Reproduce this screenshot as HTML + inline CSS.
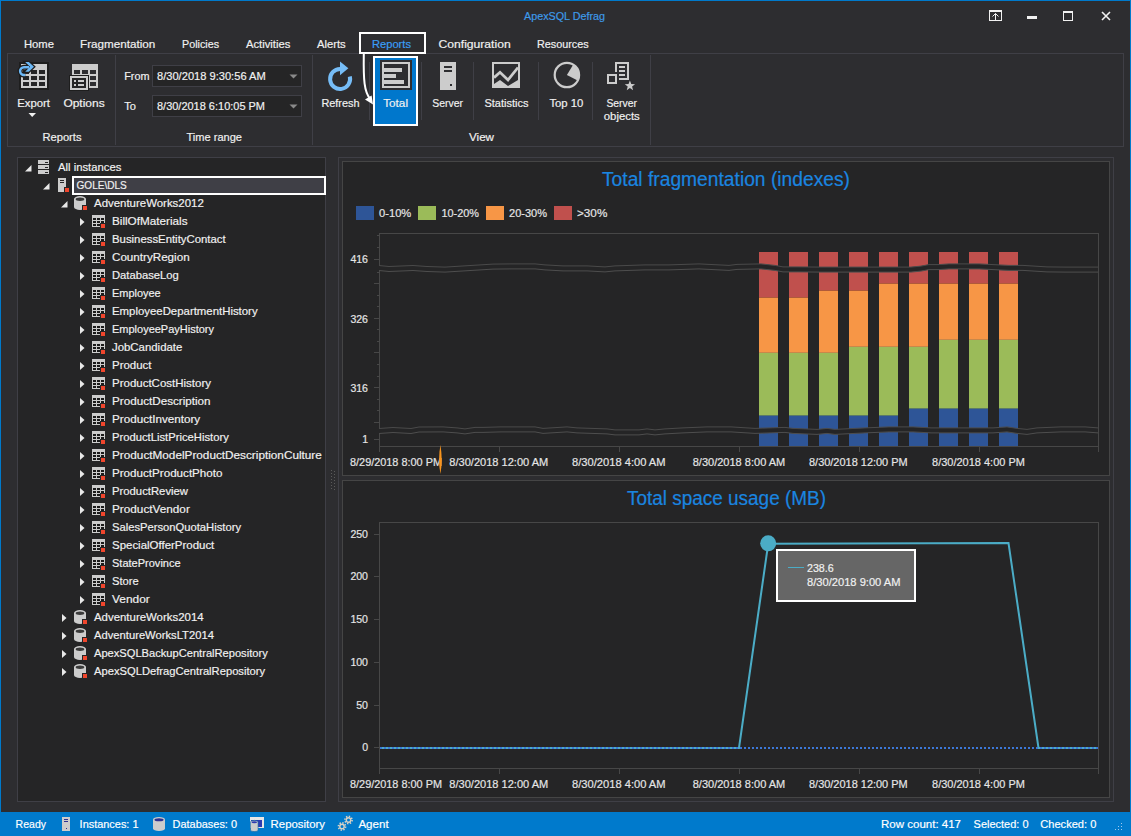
<!DOCTYPE html><html><head><meta charset="utf-8"><title>ApexSQL Defrag</title><style>html,body{margin:0;padding:0;background:#2D2D30;overflow:hidden;width:1131px;height:836px}svg{display:block}text{font-family:"Liberation Sans",sans-serif;white-space:pre}</style></head><body>
<svg width="1131" height="836" viewBox="0 0 1131 836" shape-rendering="crispEdges">
<rect x="0" y="0" width="1131" height="836" fill="#2D2D30" />
<rect x="0" y="0" width="1131" height="1" fill="#007ACC" />
<rect x="0" y="0" width="1" height="836" fill="#007ACC" />
<rect x="1130" y="0" width="1" height="836" fill="#007ACC" />
<text x="524" y="20" font-size="11.4" fill="#3E9BEA" stroke="#3E9BEA" stroke-width="0.18" textLength="81" lengthAdjust="spacingAndGlyphs" >ApexSQL Defrag</text>
<g fill="none" stroke="#F1F1F1" stroke-width="1">
<rect x="989.5" y="10.5" width="12" height="10"/>
</g>
<path d="M995.5 20.5V13.5M992.5 16.5L995.5 13.5L998.5 16.5" stroke="#F1F1F1" fill="none" shape-rendering="auto"/>
<rect x="990" y="11" width="12" height="1" fill="#F1F1F1"/>
<rect x="1027" y="16" width="10" height="3" fill="#F1F1F1" />
<rect x="1063.5" y="11.5" width="9" height="9" fill="none" stroke="#F1F1F1"/>
<rect x="1063" y="11" width="10" height="2" fill="#F1F1F1"/>
<path d="M1102 12L1110 20M1110 12L1102 20" stroke="#F1F1F1" stroke-width="1.6" shape-rendering="auto"/>
<text x="24" y="48" font-size="11.4" fill="#F1F1F1" stroke="#F1F1F1" stroke-width="0.18" textLength="30" lengthAdjust="spacingAndGlyphs" >Home</text>
<text x="80" y="48" font-size="11.4" fill="#F1F1F1" stroke="#F1F1F1" stroke-width="0.18" textLength="75.3" lengthAdjust="spacingAndGlyphs" >Fragmentation</text>
<text x="182" y="48" font-size="11.4" fill="#F1F1F1" stroke="#F1F1F1" stroke-width="0.18" textLength="37" lengthAdjust="spacingAndGlyphs" >Policies</text>
<text x="246" y="48" font-size="11.4" fill="#F1F1F1" stroke="#F1F1F1" stroke-width="0.18" textLength="44.3" lengthAdjust="spacingAndGlyphs" >Activities</text>
<text x="317" y="48" font-size="11.4" fill="#F1F1F1" stroke="#F1F1F1" stroke-width="0.18" textLength="28.6" lengthAdjust="spacingAndGlyphs" >Alerts</text>
<text x="372" y="48" font-size="11.4" fill="#3A9EF8" stroke="#3A9EF8" stroke-width="0.18" textLength="39" lengthAdjust="spacingAndGlyphs" >Reports</text>
<text x="438.5" y="48" font-size="11.4" fill="#F1F1F1" stroke="#F1F1F1" stroke-width="0.18" textLength="72.2" lengthAdjust="spacingAndGlyphs" >Configuration</text>
<text x="537" y="48" font-size="11.4" fill="#F1F1F1" stroke="#F1F1F1" stroke-width="0.18" textLength="51.7" lengthAdjust="spacingAndGlyphs" >Resources</text>
<rect x="7.5" y="53.5" width="1116" height="93" fill="none" stroke="#3F3F46" stroke-width="1"/>
<rect x="360.0" y="33.0" width="65" height="20" fill="none" stroke="#FFFFFF" stroke-width="2"/>
<rect x="115" y="55" width="1" height="90" fill="#3F3F46"/>
<rect x="312" y="55" width="1" height="90" fill="#3F3F46"/>
<rect x="650" y="55" width="1" height="90" fill="#3F3F46"/>
<rect x="369" y="62" width="1" height="58" fill="#3F3F46"/>
<rect x="421" y="62" width="1" height="58" fill="#3F3F46"/>
<rect x="473" y="62" width="1" height="58" fill="#3F3F46"/>
<rect x="538" y="62" width="1" height="58" fill="#3F3F46"/>
<rect x="592" y="62" width="1" height="58" fill="#3F3F46"/>
<text x="42.5" y="140.5" font-size="11.4" fill="#F1F1F1" stroke="#F1F1F1" stroke-width="0.18" textLength="39" lengthAdjust="spacingAndGlyphs" >Reports</text>
<text x="186.5" y="141" font-size="11.4" fill="#F1F1F1" stroke="#F1F1F1" stroke-width="0.18" textLength="55.5" lengthAdjust="spacingAndGlyphs" >Time range</text>
<text x="469" y="141" font-size="11.4" fill="#F1F1F1" stroke="#F1F1F1" stroke-width="0.18" textLength="25" lengthAdjust="spacingAndGlyphs" >View</text>
<rect x="19" y="62" width="30" height="28" fill="#1E1E1E" />
<rect x="21" y="64" width="26" height="24" fill="#CCCCCC" />
<rect x="23" y="70" width="6" height="4" fill="#252526" />
<rect x="23" y="76" width="6" height="4" fill="#252526" />
<rect x="23" y="82" width="6" height="4" fill="#252526" />
<rect x="31" y="70" width="6" height="4" fill="#252526" />
<rect x="31" y="76" width="6" height="4" fill="#252526" />
<rect x="31" y="82" width="6" height="4" fill="#252526" />
<rect x="39" y="70" width="6" height="4" fill="#252526" />
<rect x="39" y="76" width="6" height="4" fill="#252526" />
<rect x="39" y="82" width="6" height="4" fill="#252526" />
<g shape-rendering="auto">
<path d="M28 67.2 H24 A3.9 3.9 0 0 0 24 75 H25.3" fill="none" stroke="#1E1E1E" stroke-width="5"/>
<path d="M25.2 62 L28.8 62 L34 66.8 L28.8 71.7 L25.2 71.7 L30 66.8 Z" fill="#1E1E1E" stroke="#1E1E1E" stroke-width="2.5"/>
<path d="M29 67.2 H24 A3.9 3.9 0 0 0 24 75 H25.3" fill="none" stroke="#6CB8F6" stroke-width="2.5"/>
<path d="M25.2 62 L28.8 62 L34 66.8 L28.8 71.7 L25.2 71.7 L30 66.8 Z" fill="#6CB8F6"/>
</g>
<text x="17.3" y="107" font-size="11.4" fill="#F1F1F1" stroke="#F1F1F1" stroke-width="0.18" textLength="32.7" lengthAdjust="spacingAndGlyphs" >Export</text>
<path d="M28.5 113 H36 L32.2 117 Z" fill="#F1F1F1" shape-rendering="auto"/>
<rect x="72" y="64" width="26" height="24" fill="#CCCCCC" />
<rect x="74" y="70" width="6" height="4" fill="#2D2D30" />
<rect x="82" y="70" width="6" height="4" fill="#2D2D30" />
<rect x="90" y="70" width="6" height="4" fill="#2D2D30" />
<rect x="90" y="76" width="6" height="4" fill="#2D2D30" />
<rect x="90" y="82" width="6" height="4" fill="#2D2D30" />
<rect x="69" y="75" width="20" height="16" fill="#1E1E1E" />
<rect x="70" y="76" width="18" height="14" fill="#CCCCCC" />
<rect x="72" y="78" width="14" height="10" fill="#252526" />
<rect x="74" y="80" width="2" height="2" fill="#CCCCCC" />
<rect x="78" y="80" width="6" height="2" fill="#CCCCCC" />
<rect x="74" y="84" width="2" height="2" fill="#CCCCCC" />
<rect x="78" y="84" width="6" height="2" fill="#CCCCCC" />
<text x="63.4" y="107" font-size="11.4" fill="#F1F1F1" stroke="#F1F1F1" stroke-width="0.18" textLength="41.3" lengthAdjust="spacingAndGlyphs" >Options</text>
<text x="124.2" y="80" font-size="11.4" fill="#F1F1F1" stroke="#F1F1F1" stroke-width="0.18" textLength="25.3" lengthAdjust="spacingAndGlyphs" >From</text>
<text x="124.2" y="110" font-size="11.4" fill="#F1F1F1" stroke="#F1F1F1" stroke-width="0.18" textLength="11.7" lengthAdjust="spacingAndGlyphs" >To</text>
<rect x="152.5" y="65.5" width="149" height="21" fill="#252526" stroke="#3F3F46" stroke-width="1"/>
<rect x="152.5" y="95.5" width="149" height="21" fill="#252526" stroke="#3F3F46" stroke-width="1"/>
<text x="157" y="80" font-size="11.4" fill="#F1F1F1" stroke="#F1F1F1" stroke-width="0.18" textLength="108.7" lengthAdjust="spacingAndGlyphs" >8/30/2018 9:30:56 AM</text>
<text x="157" y="110" font-size="11.4" fill="#F1F1F1" stroke="#F1F1F1" stroke-width="0.18" textLength="108" lengthAdjust="spacingAndGlyphs" >8/30/2018 6:10:05 PM</text>
<path d="M289.5 74.5 H297.5 L293.5 78.5 Z" fill="#8A8A8A" shape-rendering="auto"/>
<path d="M289.5 104.5 H297.5 L293.5 108.5 Z" fill="#8A8A8A" shape-rendering="auto"/>
<g shape-rendering="auto">
<path d="M340.10 69.00 A10 10 0 1 0 349.80 76.58" fill="none" stroke="#76BDF7" stroke-width="4"/>
<path d="M340 61.5 L348.4 68.3 L340 75.2 Z" fill="#76BDF7"/>
</g>
<text x="321.4" y="107" font-size="11.4" fill="#F1F1F1" stroke="#F1F1F1" stroke-width="0.18" textLength="38.2" lengthAdjust="spacingAndGlyphs" >Refresh</text>
<rect x="374.0" y="57.0" width="43" height="68" fill="#0077CC" stroke="#FFFFFF" stroke-width="2"/>
<rect x="380" y="60" width="32" height="30" fill="#2D2D30" />
<rect x="383.0" y="63.0" width="26" height="24" fill="none" stroke="#CCCCCC" stroke-width="2"/>
<rect x="384" y="68" width="18" height="4" fill="#CCCCCC" />
<rect x="384" y="74" width="12" height="4" fill="#CCCCCC" />
<rect x="384" y="80" width="20" height="4" fill="#CCCCCC" />
<text x="383.2" y="107" font-size="11.4" fill="#F1F1F1" stroke="#F1F1F1" stroke-width="0.18" textLength="24.8" lengthAdjust="spacingAndGlyphs" >Total</text>
<path d="M363.8 54 C363.4 80 364.2 92 370.2 98.8" fill="none" stroke="#FFFFFF" stroke-width="2" shape-rendering="auto"/>
<path d="M371.6 95.6 L365 99.6 L373 104.6 Z" fill="#FFFFFF" shape-rendering="auto"/>
<rect x="440" y="62" width="16" height="28" fill="#CCCCCC" />
<rect x="444" y="66" width="8" height="2" fill="#2D2D30" />
<rect x="444" y="70" width="8" height="2" fill="#2D2D30" />
<rect x="450" y="84" width="2" height="2" fill="#2D2D30" />
<text x="432.3" y="107" font-size="11.4" fill="#F1F1F1" stroke="#F1F1F1" stroke-width="0.18" textLength="30.7" lengthAdjust="spacingAndGlyphs" >Server</text>
<rect x="493.0" y="63.0" width="26" height="24" fill="#2D2D30" stroke="#CCCCCC" stroke-width="2"/>
<g shape-rendering="auto">
<path d="M494 84 L500 80 L508 86 L518 80 L518 86 L494 86 Z" fill="#CCCCCC"/>
<path d="M494 77.6 L500 72.3 L508 80 L518 67.5" fill="none" stroke="#CCCCCC" stroke-width="2.8"/>
</g>
<text x="484.4" y="107" font-size="11.4" fill="#F1F1F1" stroke="#F1F1F1" stroke-width="0.18" textLength="44" lengthAdjust="spacingAndGlyphs" >Statistics</text>
<g shape-rendering="auto">
<circle cx="566.9" cy="75" r="12.2" fill="#2D2D30" stroke="#CCCCCC" stroke-width="2.2"/>
<path d="M566.9 75 L573.3 64.5 A12 12 0 0 1 577.6 80.5 Z" fill="#CCCCCC"/>
</g>
<text x="549.4" y="107" font-size="11.4" fill="#F1F1F1" stroke="#F1F1F1" stroke-width="0.18" textLength="34" lengthAdjust="spacingAndGlyphs" >Top 10</text>
<rect x="616.0" y="63.0" width="12" height="16" fill="#2D2D30" stroke="#CCCCCC" stroke-width="2"/>
<rect x="619" y="66" width="6" height="2" fill="#CCCCCC" />
<rect x="619" y="70" width="6" height="2" fill="#CCCCCC" />
<rect x="619" y="74" width="6" height="2" fill="#CCCCCC" />
<rect x="605" y="72" width="14" height="14" fill="#2D2D30" />
<rect x="608.0" y="75.0" width="8" height="8" fill="#2D2D30" stroke="#CCCCCC" stroke-width="2"/>
<polygon points="629.90,80.40 631.25,83.94 635.04,84.13 632.09,86.51 633.07,90.17 629.90,88.10 626.73,90.17 627.71,86.51 624.76,84.13 628.55,83.94" fill="#CCCCCC" shape-rendering="auto"/>
<text x="606.4" y="107" font-size="11.4" fill="#F1F1F1" stroke="#F1F1F1" stroke-width="0.18" textLength="30.5" lengthAdjust="spacingAndGlyphs" >Server</text>
<text x="603.8" y="120" font-size="11.4" fill="#F1F1F1" stroke="#F1F1F1" stroke-width="0.18" textLength="35.9" lengthAdjust="spacingAndGlyphs" >objects</text>
<rect x="17.5" y="157.5" width="308" height="644" fill="#252526" stroke="#3F3F46" stroke-width="1"/>
<path d="M25 171.5 L31.5 171.5 L31.5 165 Z" fill="#E8E8E8" shape-rendering="auto"/>
<rect x="38" y="160" width="11" height="4" fill="#CCCCCC" />
<rect x="45" y="161.5" width="3" height="1.5" fill="#252526" />
<rect x="38" y="165" width="11" height="4" fill="#CCCCCC" />
<rect x="45" y="166.5" width="3" height="1.5" fill="#252526" />
<rect x="38" y="170" width="11" height="4" fill="#CCCCCC" />
<rect x="45" y="171.5" width="3" height="1.5" fill="#252526" />
<text x="58" y="171" font-size="11.4" fill="#F1F1F1" stroke="#F1F1F1" stroke-width="0.18" textLength="63.3" lengthAdjust="spacingAndGlyphs" >All instances</text>
<path d="M43 189.5 L49.5 189.5 L49.5 183 Z" fill="#E8E8E8" shape-rendering="auto"/>
<rect x="58" y="178" width="8" height="14" fill="#CCCCCC" />
<rect x="60" y="180" width="4" height="1" fill="#252526" />
<rect x="60" y="182" width="4" height="1" fill="#252526" />
<rect x="64" y="187" width="6" height="6" fill="#252526" />
<rect x="65" y="188" width="4" height="4" fill="#F0462D" />
<rect x="73.0" y="177.0" width="252" height="17" fill="#3F3F46" stroke="#FFFFFF" stroke-width="2"/>
<text x="76.5" y="189" font-size="11.4" fill="#F1F1F1" stroke="#F1F1F1" stroke-width="0.18" textLength="50.3" lengthAdjust="spacingAndGlyphs" >GOLE\DLS</text>
<path d="M61 207.5 L67.5 207.5 L67.5 201 Z" fill="#E8E8E8" shape-rendering="auto"/>
<g shape-rendering="auto">
<path d="M74 199 A6 3 0 0 1 86 199 V207 A6 3 0 0 1 74 207 Z" fill="#CCCCCC"/>
<ellipse cx="80" cy="199.2" rx="4.3" ry="1.7" fill="#3A3A3A"/>
</g>
<rect x="82" y="205" width="6" height="6" fill="#252526" />
<rect x="83" y="206" width="4" height="4" fill="#F0462D" />
<text x="94" y="207" font-size="11.4" fill="#F1F1F1" stroke="#F1F1F1" stroke-width="0.18" textLength="109.8" lengthAdjust="spacingAndGlyphs" >AdventureWorks2012</text>
<path d="M80 218 L84.5 222 L80 226 Z" fill="#E8E8E8" shape-rendering="auto"/>
<rect x="92" y="215" width="13" height="12" fill="#CCCCCC" />
<rect x="93" y="218" width="3" height="2" fill="#1A1A1A" />
<rect x="93" y="221" width="3" height="2" fill="#1A1A1A" />
<rect x="93" y="224" width="3" height="2" fill="#1A1A1A" />
<rect x="97" y="218" width="3" height="2" fill="#1A1A1A" />
<rect x="97" y="221" width="3" height="2" fill="#1A1A1A" />
<rect x="97" y="224" width="3" height="2" fill="#1A1A1A" />
<rect x="101" y="218" width="3" height="2" fill="#1A1A1A" />
<rect x="101" y="221" width="3" height="2" fill="#1A1A1A" />
<rect x="101" y="224" width="3" height="2" fill="#1A1A1A" />
<rect x="100" y="223" width="6" height="6" fill="#252526" />
<rect x="101" y="224" width="4" height="4" fill="#F0462D" />
<text x="112" y="225" font-size="11.4" fill="#F1F1F1" stroke="#F1F1F1" stroke-width="0.18" textLength="75.5" lengthAdjust="spacingAndGlyphs" >BillOfMaterials</text>
<path d="M80 236 L84.5 240 L80 244 Z" fill="#E8E8E8" shape-rendering="auto"/>
<rect x="92" y="233" width="13" height="12" fill="#CCCCCC" />
<rect x="93" y="236" width="3" height="2" fill="#1A1A1A" />
<rect x="93" y="239" width="3" height="2" fill="#1A1A1A" />
<rect x="93" y="242" width="3" height="2" fill="#1A1A1A" />
<rect x="97" y="236" width="3" height="2" fill="#1A1A1A" />
<rect x="97" y="239" width="3" height="2" fill="#1A1A1A" />
<rect x="97" y="242" width="3" height="2" fill="#1A1A1A" />
<rect x="101" y="236" width="3" height="2" fill="#1A1A1A" />
<rect x="101" y="239" width="3" height="2" fill="#1A1A1A" />
<rect x="101" y="242" width="3" height="2" fill="#1A1A1A" />
<rect x="100" y="241" width="6" height="6" fill="#252526" />
<rect x="101" y="242" width="4" height="4" fill="#F0462D" />
<text x="112" y="243" font-size="11.4" fill="#F1F1F1" stroke="#F1F1F1" stroke-width="0.18" textLength="113.6" lengthAdjust="spacingAndGlyphs" >BusinessEntityContact</text>
<path d="M80 254 L84.5 258 L80 262 Z" fill="#E8E8E8" shape-rendering="auto"/>
<rect x="92" y="251" width="13" height="12" fill="#CCCCCC" />
<rect x="93" y="254" width="3" height="2" fill="#1A1A1A" />
<rect x="93" y="257" width="3" height="2" fill="#1A1A1A" />
<rect x="93" y="260" width="3" height="2" fill="#1A1A1A" />
<rect x="97" y="254" width="3" height="2" fill="#1A1A1A" />
<rect x="97" y="257" width="3" height="2" fill="#1A1A1A" />
<rect x="97" y="260" width="3" height="2" fill="#1A1A1A" />
<rect x="101" y="254" width="3" height="2" fill="#1A1A1A" />
<rect x="101" y="257" width="3" height="2" fill="#1A1A1A" />
<rect x="101" y="260" width="3" height="2" fill="#1A1A1A" />
<rect x="100" y="259" width="6" height="6" fill="#252526" />
<rect x="101" y="260" width="4" height="4" fill="#F0462D" />
<text x="112" y="261" font-size="11.4" fill="#F1F1F1" stroke="#F1F1F1" stroke-width="0.18" textLength="77.6" lengthAdjust="spacingAndGlyphs" >CountryRegion</text>
<path d="M80 272 L84.5 276 L80 280 Z" fill="#E8E8E8" shape-rendering="auto"/>
<rect x="92" y="269" width="13" height="12" fill="#CCCCCC" />
<rect x="93" y="272" width="3" height="2" fill="#1A1A1A" />
<rect x="93" y="275" width="3" height="2" fill="#1A1A1A" />
<rect x="93" y="278" width="3" height="2" fill="#1A1A1A" />
<rect x="97" y="272" width="3" height="2" fill="#1A1A1A" />
<rect x="97" y="275" width="3" height="2" fill="#1A1A1A" />
<rect x="97" y="278" width="3" height="2" fill="#1A1A1A" />
<rect x="101" y="272" width="3" height="2" fill="#1A1A1A" />
<rect x="101" y="275" width="3" height="2" fill="#1A1A1A" />
<rect x="101" y="278" width="3" height="2" fill="#1A1A1A" />
<rect x="100" y="277" width="6" height="6" fill="#252526" />
<rect x="101" y="278" width="4" height="4" fill="#F0462D" />
<text x="112" y="279" font-size="11.4" fill="#F1F1F1" stroke="#F1F1F1" stroke-width="0.18" textLength="66.7" lengthAdjust="spacingAndGlyphs" >DatabaseLog</text>
<path d="M80 290 L84.5 294 L80 298 Z" fill="#E8E8E8" shape-rendering="auto"/>
<rect x="92" y="287" width="13" height="12" fill="#CCCCCC" />
<rect x="93" y="290" width="3" height="2" fill="#1A1A1A" />
<rect x="93" y="293" width="3" height="2" fill="#1A1A1A" />
<rect x="93" y="296" width="3" height="2" fill="#1A1A1A" />
<rect x="97" y="290" width="3" height="2" fill="#1A1A1A" />
<rect x="97" y="293" width="3" height="2" fill="#1A1A1A" />
<rect x="97" y="296" width="3" height="2" fill="#1A1A1A" />
<rect x="101" y="290" width="3" height="2" fill="#1A1A1A" />
<rect x="101" y="293" width="3" height="2" fill="#1A1A1A" />
<rect x="101" y="296" width="3" height="2" fill="#1A1A1A" />
<rect x="100" y="295" width="6" height="6" fill="#252526" />
<rect x="101" y="296" width="4" height="4" fill="#F0462D" />
<text x="112" y="297" font-size="11.4" fill="#F1F1F1" stroke="#F1F1F1" stroke-width="0.18" textLength="48.7" lengthAdjust="spacingAndGlyphs" >Employee</text>
<path d="M80 308 L84.5 312 L80 316 Z" fill="#E8E8E8" shape-rendering="auto"/>
<rect x="92" y="305" width="13" height="12" fill="#CCCCCC" />
<rect x="93" y="308" width="3" height="2" fill="#1A1A1A" />
<rect x="93" y="311" width="3" height="2" fill="#1A1A1A" />
<rect x="93" y="314" width="3" height="2" fill="#1A1A1A" />
<rect x="97" y="308" width="3" height="2" fill="#1A1A1A" />
<rect x="97" y="311" width="3" height="2" fill="#1A1A1A" />
<rect x="97" y="314" width="3" height="2" fill="#1A1A1A" />
<rect x="101" y="308" width="3" height="2" fill="#1A1A1A" />
<rect x="101" y="311" width="3" height="2" fill="#1A1A1A" />
<rect x="101" y="314" width="3" height="2" fill="#1A1A1A" />
<rect x="100" y="313" width="6" height="6" fill="#252526" />
<rect x="101" y="314" width="4" height="4" fill="#F0462D" />
<text x="112" y="315" font-size="11.4" fill="#F1F1F1" stroke="#F1F1F1" stroke-width="0.18" textLength="145.6" lengthAdjust="spacingAndGlyphs" >EmployeeDepartmentHistory</text>
<path d="M80 326 L84.5 330 L80 334 Z" fill="#E8E8E8" shape-rendering="auto"/>
<rect x="92" y="323" width="13" height="12" fill="#CCCCCC" />
<rect x="93" y="326" width="3" height="2" fill="#1A1A1A" />
<rect x="93" y="329" width="3" height="2" fill="#1A1A1A" />
<rect x="93" y="332" width="3" height="2" fill="#1A1A1A" />
<rect x="97" y="326" width="3" height="2" fill="#1A1A1A" />
<rect x="97" y="329" width="3" height="2" fill="#1A1A1A" />
<rect x="97" y="332" width="3" height="2" fill="#1A1A1A" />
<rect x="101" y="326" width="3" height="2" fill="#1A1A1A" />
<rect x="101" y="329" width="3" height="2" fill="#1A1A1A" />
<rect x="101" y="332" width="3" height="2" fill="#1A1A1A" />
<rect x="100" y="331" width="6" height="6" fill="#252526" />
<rect x="101" y="332" width="4" height="4" fill="#F0462D" />
<text x="112" y="333" font-size="11.4" fill="#F1F1F1" stroke="#F1F1F1" stroke-width="0.18" textLength="102" lengthAdjust="spacingAndGlyphs" >EmployeePayHistory</text>
<path d="M80 344 L84.5 348 L80 352 Z" fill="#E8E8E8" shape-rendering="auto"/>
<rect x="92" y="341" width="13" height="12" fill="#CCCCCC" />
<rect x="93" y="344" width="3" height="2" fill="#1A1A1A" />
<rect x="93" y="347" width="3" height="2" fill="#1A1A1A" />
<rect x="93" y="350" width="3" height="2" fill="#1A1A1A" />
<rect x="97" y="344" width="3" height="2" fill="#1A1A1A" />
<rect x="97" y="347" width="3" height="2" fill="#1A1A1A" />
<rect x="97" y="350" width="3" height="2" fill="#1A1A1A" />
<rect x="101" y="344" width="3" height="2" fill="#1A1A1A" />
<rect x="101" y="347" width="3" height="2" fill="#1A1A1A" />
<rect x="101" y="350" width="3" height="2" fill="#1A1A1A" />
<rect x="100" y="349" width="6" height="6" fill="#252526" />
<rect x="101" y="350" width="4" height="4" fill="#F0462D" />
<text x="112" y="351" font-size="11.4" fill="#F1F1F1" stroke="#F1F1F1" stroke-width="0.18" textLength="70.3" lengthAdjust="spacingAndGlyphs" >JobCandidate</text>
<path d="M80 362 L84.5 366 L80 370 Z" fill="#E8E8E8" shape-rendering="auto"/>
<rect x="92" y="359" width="13" height="12" fill="#CCCCCC" />
<rect x="93" y="362" width="3" height="2" fill="#1A1A1A" />
<rect x="93" y="365" width="3" height="2" fill="#1A1A1A" />
<rect x="93" y="368" width="3" height="2" fill="#1A1A1A" />
<rect x="97" y="362" width="3" height="2" fill="#1A1A1A" />
<rect x="97" y="365" width="3" height="2" fill="#1A1A1A" />
<rect x="97" y="368" width="3" height="2" fill="#1A1A1A" />
<rect x="101" y="362" width="3" height="2" fill="#1A1A1A" />
<rect x="101" y="365" width="3" height="2" fill="#1A1A1A" />
<rect x="101" y="368" width="3" height="2" fill="#1A1A1A" />
<rect x="100" y="367" width="6" height="6" fill="#252526" />
<rect x="101" y="368" width="4" height="4" fill="#F0462D" />
<text x="112" y="369" font-size="11.4" fill="#F1F1F1" stroke="#F1F1F1" stroke-width="0.18" textLength="39.5" lengthAdjust="spacingAndGlyphs" >Product</text>
<path d="M80 380 L84.5 384 L80 388 Z" fill="#E8E8E8" shape-rendering="auto"/>
<rect x="92" y="377" width="13" height="12" fill="#CCCCCC" />
<rect x="93" y="380" width="3" height="2" fill="#1A1A1A" />
<rect x="93" y="383" width="3" height="2" fill="#1A1A1A" />
<rect x="93" y="386" width="3" height="2" fill="#1A1A1A" />
<rect x="97" y="380" width="3" height="2" fill="#1A1A1A" />
<rect x="97" y="383" width="3" height="2" fill="#1A1A1A" />
<rect x="97" y="386" width="3" height="2" fill="#1A1A1A" />
<rect x="101" y="380" width="3" height="2" fill="#1A1A1A" />
<rect x="101" y="383" width="3" height="2" fill="#1A1A1A" />
<rect x="101" y="386" width="3" height="2" fill="#1A1A1A" />
<rect x="100" y="385" width="6" height="6" fill="#252526" />
<rect x="101" y="386" width="4" height="4" fill="#F0462D" />
<text x="112" y="387" font-size="11.4" fill="#F1F1F1" stroke="#F1F1F1" stroke-width="0.18" textLength="99" lengthAdjust="spacingAndGlyphs" >ProductCostHistory</text>
<path d="M80 398 L84.5 402 L80 406 Z" fill="#E8E8E8" shape-rendering="auto"/>
<rect x="92" y="395" width="13" height="12" fill="#CCCCCC" />
<rect x="93" y="398" width="3" height="2" fill="#1A1A1A" />
<rect x="93" y="401" width="3" height="2" fill="#1A1A1A" />
<rect x="93" y="404" width="3" height="2" fill="#1A1A1A" />
<rect x="97" y="398" width="3" height="2" fill="#1A1A1A" />
<rect x="97" y="401" width="3" height="2" fill="#1A1A1A" />
<rect x="97" y="404" width="3" height="2" fill="#1A1A1A" />
<rect x="101" y="398" width="3" height="2" fill="#1A1A1A" />
<rect x="101" y="401" width="3" height="2" fill="#1A1A1A" />
<rect x="101" y="404" width="3" height="2" fill="#1A1A1A" />
<rect x="100" y="403" width="6" height="6" fill="#252526" />
<rect x="101" y="404" width="4" height="4" fill="#F0462D" />
<text x="112" y="405" font-size="11.4" fill="#F1F1F1" stroke="#F1F1F1" stroke-width="0.18" textLength="98.6" lengthAdjust="spacingAndGlyphs" >ProductDescription</text>
<path d="M80 416 L84.5 420 L80 424 Z" fill="#E8E8E8" shape-rendering="auto"/>
<rect x="92" y="413" width="13" height="12" fill="#CCCCCC" />
<rect x="93" y="416" width="3" height="2" fill="#1A1A1A" />
<rect x="93" y="419" width="3" height="2" fill="#1A1A1A" />
<rect x="93" y="422" width="3" height="2" fill="#1A1A1A" />
<rect x="97" y="416" width="3" height="2" fill="#1A1A1A" />
<rect x="97" y="419" width="3" height="2" fill="#1A1A1A" />
<rect x="97" y="422" width="3" height="2" fill="#1A1A1A" />
<rect x="101" y="416" width="3" height="2" fill="#1A1A1A" />
<rect x="101" y="419" width="3" height="2" fill="#1A1A1A" />
<rect x="101" y="422" width="3" height="2" fill="#1A1A1A" />
<rect x="100" y="421" width="6" height="6" fill="#252526" />
<rect x="101" y="422" width="4" height="4" fill="#F0462D" />
<text x="112" y="423" font-size="11.4" fill="#F1F1F1" stroke="#F1F1F1" stroke-width="0.18" textLength="88.2" lengthAdjust="spacingAndGlyphs" >ProductInventory</text>
<path d="M80 434 L84.5 438 L80 442 Z" fill="#E8E8E8" shape-rendering="auto"/>
<rect x="92" y="431" width="13" height="12" fill="#CCCCCC" />
<rect x="93" y="434" width="3" height="2" fill="#1A1A1A" />
<rect x="93" y="437" width="3" height="2" fill="#1A1A1A" />
<rect x="93" y="440" width="3" height="2" fill="#1A1A1A" />
<rect x="97" y="434" width="3" height="2" fill="#1A1A1A" />
<rect x="97" y="437" width="3" height="2" fill="#1A1A1A" />
<rect x="97" y="440" width="3" height="2" fill="#1A1A1A" />
<rect x="101" y="434" width="3" height="2" fill="#1A1A1A" />
<rect x="101" y="437" width="3" height="2" fill="#1A1A1A" />
<rect x="101" y="440" width="3" height="2" fill="#1A1A1A" />
<rect x="100" y="439" width="6" height="6" fill="#252526" />
<rect x="101" y="440" width="4" height="4" fill="#F0462D" />
<text x="112" y="441" font-size="11.4" fill="#F1F1F1" stroke="#F1F1F1" stroke-width="0.18" textLength="116.8" lengthAdjust="spacingAndGlyphs" >ProductListPriceHistory</text>
<path d="M80 452 L84.5 456 L80 460 Z" fill="#E8E8E8" shape-rendering="auto"/>
<rect x="92" y="449" width="13" height="12" fill="#CCCCCC" />
<rect x="93" y="452" width="3" height="2" fill="#1A1A1A" />
<rect x="93" y="455" width="3" height="2" fill="#1A1A1A" />
<rect x="93" y="458" width="3" height="2" fill="#1A1A1A" />
<rect x="97" y="452" width="3" height="2" fill="#1A1A1A" />
<rect x="97" y="455" width="3" height="2" fill="#1A1A1A" />
<rect x="97" y="458" width="3" height="2" fill="#1A1A1A" />
<rect x="101" y="452" width="3" height="2" fill="#1A1A1A" />
<rect x="101" y="455" width="3" height="2" fill="#1A1A1A" />
<rect x="101" y="458" width="3" height="2" fill="#1A1A1A" />
<rect x="100" y="457" width="6" height="6" fill="#252526" />
<rect x="101" y="458" width="4" height="4" fill="#F0462D" />
<text x="112" y="459" font-size="11.4" fill="#F1F1F1" stroke="#F1F1F1" stroke-width="0.18" textLength="209.8" lengthAdjust="spacingAndGlyphs" >ProductModelProductDescriptionCulture</text>
<path d="M80 470 L84.5 474 L80 478 Z" fill="#E8E8E8" shape-rendering="auto"/>
<rect x="92" y="467" width="13" height="12" fill="#CCCCCC" />
<rect x="93" y="470" width="3" height="2" fill="#1A1A1A" />
<rect x="93" y="473" width="3" height="2" fill="#1A1A1A" />
<rect x="93" y="476" width="3" height="2" fill="#1A1A1A" />
<rect x="97" y="470" width="3" height="2" fill="#1A1A1A" />
<rect x="97" y="473" width="3" height="2" fill="#1A1A1A" />
<rect x="97" y="476" width="3" height="2" fill="#1A1A1A" />
<rect x="101" y="470" width="3" height="2" fill="#1A1A1A" />
<rect x="101" y="473" width="3" height="2" fill="#1A1A1A" />
<rect x="101" y="476" width="3" height="2" fill="#1A1A1A" />
<rect x="100" y="475" width="6" height="6" fill="#252526" />
<rect x="101" y="476" width="4" height="4" fill="#F0462D" />
<text x="112" y="477" font-size="11.4" fill="#F1F1F1" stroke="#F1F1F1" stroke-width="0.18" textLength="110.5" lengthAdjust="spacingAndGlyphs" >ProductProductPhoto</text>
<path d="M80 488 L84.5 492 L80 496 Z" fill="#E8E8E8" shape-rendering="auto"/>
<rect x="92" y="485" width="13" height="12" fill="#CCCCCC" />
<rect x="93" y="488" width="3" height="2" fill="#1A1A1A" />
<rect x="93" y="491" width="3" height="2" fill="#1A1A1A" />
<rect x="93" y="494" width="3" height="2" fill="#1A1A1A" />
<rect x="97" y="488" width="3" height="2" fill="#1A1A1A" />
<rect x="97" y="491" width="3" height="2" fill="#1A1A1A" />
<rect x="97" y="494" width="3" height="2" fill="#1A1A1A" />
<rect x="101" y="488" width="3" height="2" fill="#1A1A1A" />
<rect x="101" y="491" width="3" height="2" fill="#1A1A1A" />
<rect x="101" y="494" width="3" height="2" fill="#1A1A1A" />
<rect x="100" y="493" width="6" height="6" fill="#252526" />
<rect x="101" y="494" width="4" height="4" fill="#F0462D" />
<text x="112" y="495" font-size="11.4" fill="#F1F1F1" stroke="#F1F1F1" stroke-width="0.18" textLength="76" lengthAdjust="spacingAndGlyphs" >ProductReview</text>
<path d="M80 506 L84.5 510 L80 514 Z" fill="#E8E8E8" shape-rendering="auto"/>
<rect x="92" y="503" width="13" height="12" fill="#CCCCCC" />
<rect x="93" y="506" width="3" height="2" fill="#1A1A1A" />
<rect x="93" y="509" width="3" height="2" fill="#1A1A1A" />
<rect x="93" y="512" width="3" height="2" fill="#1A1A1A" />
<rect x="97" y="506" width="3" height="2" fill="#1A1A1A" />
<rect x="97" y="509" width="3" height="2" fill="#1A1A1A" />
<rect x="97" y="512" width="3" height="2" fill="#1A1A1A" />
<rect x="101" y="506" width="3" height="2" fill="#1A1A1A" />
<rect x="101" y="509" width="3" height="2" fill="#1A1A1A" />
<rect x="101" y="512" width="3" height="2" fill="#1A1A1A" />
<rect x="100" y="511" width="6" height="6" fill="#252526" />
<rect x="101" y="512" width="4" height="4" fill="#F0462D" />
<text x="112" y="513" font-size="11.4" fill="#F1F1F1" stroke="#F1F1F1" stroke-width="0.18" textLength="77.8" lengthAdjust="spacingAndGlyphs" >ProductVendor</text>
<path d="M80 524 L84.5 528 L80 532 Z" fill="#E8E8E8" shape-rendering="auto"/>
<rect x="92" y="521" width="13" height="12" fill="#CCCCCC" />
<rect x="93" y="524" width="3" height="2" fill="#1A1A1A" />
<rect x="93" y="527" width="3" height="2" fill="#1A1A1A" />
<rect x="93" y="530" width="3" height="2" fill="#1A1A1A" />
<rect x="97" y="524" width="3" height="2" fill="#1A1A1A" />
<rect x="97" y="527" width="3" height="2" fill="#1A1A1A" />
<rect x="97" y="530" width="3" height="2" fill="#1A1A1A" />
<rect x="101" y="524" width="3" height="2" fill="#1A1A1A" />
<rect x="101" y="527" width="3" height="2" fill="#1A1A1A" />
<rect x="101" y="530" width="3" height="2" fill="#1A1A1A" />
<rect x="100" y="529" width="6" height="6" fill="#252526" />
<rect x="101" y="530" width="4" height="4" fill="#F0462D" />
<text x="112" y="531" font-size="11.4" fill="#F1F1F1" stroke="#F1F1F1" stroke-width="0.18" textLength="129" lengthAdjust="spacingAndGlyphs" >SalesPersonQuotaHistory</text>
<path d="M80 542 L84.5 546 L80 550 Z" fill="#E8E8E8" shape-rendering="auto"/>
<rect x="92" y="539" width="13" height="12" fill="#CCCCCC" />
<rect x="93" y="542" width="3" height="2" fill="#1A1A1A" />
<rect x="93" y="545" width="3" height="2" fill="#1A1A1A" />
<rect x="93" y="548" width="3" height="2" fill="#1A1A1A" />
<rect x="97" y="542" width="3" height="2" fill="#1A1A1A" />
<rect x="97" y="545" width="3" height="2" fill="#1A1A1A" />
<rect x="97" y="548" width="3" height="2" fill="#1A1A1A" />
<rect x="101" y="542" width="3" height="2" fill="#1A1A1A" />
<rect x="101" y="545" width="3" height="2" fill="#1A1A1A" />
<rect x="101" y="548" width="3" height="2" fill="#1A1A1A" />
<rect x="100" y="547" width="6" height="6" fill="#252526" />
<rect x="101" y="548" width="4" height="4" fill="#F0462D" />
<text x="112" y="549" font-size="11.4" fill="#F1F1F1" stroke="#F1F1F1" stroke-width="0.18" textLength="102.3" lengthAdjust="spacingAndGlyphs" >SpecialOfferProduct</text>
<path d="M80 560 L84.5 564 L80 568 Z" fill="#E8E8E8" shape-rendering="auto"/>
<rect x="92" y="557" width="13" height="12" fill="#CCCCCC" />
<rect x="93" y="560" width="3" height="2" fill="#1A1A1A" />
<rect x="93" y="563" width="3" height="2" fill="#1A1A1A" />
<rect x="93" y="566" width="3" height="2" fill="#1A1A1A" />
<rect x="97" y="560" width="3" height="2" fill="#1A1A1A" />
<rect x="97" y="563" width="3" height="2" fill="#1A1A1A" />
<rect x="97" y="566" width="3" height="2" fill="#1A1A1A" />
<rect x="101" y="560" width="3" height="2" fill="#1A1A1A" />
<rect x="101" y="563" width="3" height="2" fill="#1A1A1A" />
<rect x="101" y="566" width="3" height="2" fill="#1A1A1A" />
<rect x="100" y="565" width="6" height="6" fill="#252526" />
<rect x="101" y="566" width="4" height="4" fill="#F0462D" />
<text x="112" y="567" font-size="11.4" fill="#F1F1F1" stroke="#F1F1F1" stroke-width="0.18" textLength="68.6" lengthAdjust="spacingAndGlyphs" >StateProvince</text>
<path d="M80 578 L84.5 582 L80 586 Z" fill="#E8E8E8" shape-rendering="auto"/>
<rect x="92" y="575" width="13" height="12" fill="#CCCCCC" />
<rect x="93" y="578" width="3" height="2" fill="#1A1A1A" />
<rect x="93" y="581" width="3" height="2" fill="#1A1A1A" />
<rect x="93" y="584" width="3" height="2" fill="#1A1A1A" />
<rect x="97" y="578" width="3" height="2" fill="#1A1A1A" />
<rect x="97" y="581" width="3" height="2" fill="#1A1A1A" />
<rect x="97" y="584" width="3" height="2" fill="#1A1A1A" />
<rect x="101" y="578" width="3" height="2" fill="#1A1A1A" />
<rect x="101" y="581" width="3" height="2" fill="#1A1A1A" />
<rect x="101" y="584" width="3" height="2" fill="#1A1A1A" />
<rect x="100" y="583" width="6" height="6" fill="#252526" />
<rect x="101" y="584" width="4" height="4" fill="#F0462D" />
<text x="112" y="585" font-size="11.4" fill="#F1F1F1" stroke="#F1F1F1" stroke-width="0.18" textLength="26.7" lengthAdjust="spacingAndGlyphs" >Store</text>
<path d="M80 596 L84.5 600 L80 604 Z" fill="#E8E8E8" shape-rendering="auto"/>
<rect x="92" y="593" width="13" height="12" fill="#CCCCCC" />
<rect x="93" y="596" width="3" height="2" fill="#1A1A1A" />
<rect x="93" y="599" width="3" height="2" fill="#1A1A1A" />
<rect x="93" y="602" width="3" height="2" fill="#1A1A1A" />
<rect x="97" y="596" width="3" height="2" fill="#1A1A1A" />
<rect x="97" y="599" width="3" height="2" fill="#1A1A1A" />
<rect x="97" y="602" width="3" height="2" fill="#1A1A1A" />
<rect x="101" y="596" width="3" height="2" fill="#1A1A1A" />
<rect x="101" y="599" width="3" height="2" fill="#1A1A1A" />
<rect x="101" y="602" width="3" height="2" fill="#1A1A1A" />
<rect x="100" y="601" width="6" height="6" fill="#252526" />
<rect x="101" y="602" width="4" height="4" fill="#F0462D" />
<text x="112" y="603" font-size="11.4" fill="#F1F1F1" stroke="#F1F1F1" stroke-width="0.18" textLength="37.8" lengthAdjust="spacingAndGlyphs" >Vendor</text>
<path d="M62 614 L66.5 618 L62 622 Z" fill="#E8E8E8" shape-rendering="auto"/>
<g shape-rendering="auto">
<path d="M74 613 A6 3 0 0 1 86 613 V621 A6 3 0 0 1 74 621 Z" fill="#CCCCCC"/>
<ellipse cx="80" cy="613.2" rx="4.3" ry="1.7" fill="#3A3A3A"/>
</g>
<rect x="82" y="619" width="6" height="6" fill="#252526" />
<rect x="83" y="620" width="4" height="4" fill="#F0462D" />
<text x="94" y="621" font-size="11.4" fill="#F1F1F1" stroke="#F1F1F1" stroke-width="0.18" textLength="109.6" lengthAdjust="spacingAndGlyphs" >AdventureWorks2014</text>
<path d="M62 632 L66.5 636 L62 640 Z" fill="#E8E8E8" shape-rendering="auto"/>
<g shape-rendering="auto">
<path d="M74 631 A6 3 0 0 1 86 631 V639 A6 3 0 0 1 74 639 Z" fill="#CCCCCC"/>
<ellipse cx="80" cy="631.2" rx="4.3" ry="1.7" fill="#3A3A3A"/>
</g>
<rect x="82" y="637" width="6" height="6" fill="#252526" />
<rect x="83" y="638" width="4" height="4" fill="#F0462D" />
<text x="94" y="639" font-size="11.4" fill="#F1F1F1" stroke="#F1F1F1" stroke-width="0.18" textLength="119.9" lengthAdjust="spacingAndGlyphs" >AdventureWorksLT2014</text>
<path d="M62 650 L66.5 654 L62 658 Z" fill="#E8E8E8" shape-rendering="auto"/>
<g shape-rendering="auto">
<path d="M74 649 A6 3 0 0 1 86 649 V657 A6 3 0 0 1 74 657 Z" fill="#CCCCCC"/>
<ellipse cx="80" cy="649.2" rx="4.3" ry="1.7" fill="#3A3A3A"/>
</g>
<rect x="82" y="655" width="6" height="6" fill="#252526" />
<rect x="83" y="656" width="4" height="4" fill="#F0462D" />
<text x="94" y="657" font-size="11.4" fill="#F1F1F1" stroke="#F1F1F1" stroke-width="0.18" textLength="173.7" lengthAdjust="spacingAndGlyphs" >ApexSQLBackupCentralRepository</text>
<path d="M62 668 L66.5 672 L62 676 Z" fill="#E8E8E8" shape-rendering="auto"/>
<g shape-rendering="auto">
<path d="M74 667 A6 3 0 0 1 86 667 V675 A6 3 0 0 1 74 675 Z" fill="#CCCCCC"/>
<ellipse cx="80" cy="667.2" rx="4.3" ry="1.7" fill="#3A3A3A"/>
</g>
<rect x="82" y="673" width="6" height="6" fill="#252526" />
<rect x="83" y="674" width="4" height="4" fill="#F0462D" />
<text x="94" y="675" font-size="11.4" fill="#F1F1F1" stroke="#F1F1F1" stroke-width="0.18" textLength="171.1" lengthAdjust="spacingAndGlyphs" >ApexSQLDefragCentralRepository</text>
<rect x="331" y="470" width="1" height="1" fill="#5A5A5A" />
<rect x="334" y="471" width="1" height="1" fill="#5A5A5A" />
<rect x="331" y="473" width="1" height="1" fill="#5A5A5A" />
<rect x="334" y="474" width="1" height="1" fill="#5A5A5A" />
<rect x="331" y="476" width="1" height="1" fill="#5A5A5A" />
<rect x="334" y="477" width="1" height="1" fill="#5A5A5A" />
<rect x="331" y="479" width="1" height="1" fill="#5A5A5A" />
<rect x="334" y="480" width="1" height="1" fill="#5A5A5A" />
<rect x="331" y="482" width="1" height="1" fill="#5A5A5A" />
<rect x="334" y="483" width="1" height="1" fill="#5A5A5A" />
<rect x="331" y="485" width="1" height="1" fill="#5A5A5A" />
<rect x="334" y="486" width="1" height="1" fill="#5A5A5A" />
<rect x="331" y="488" width="1" height="1" fill="#5A5A5A" />
<rect x="334" y="489" width="1" height="1" fill="#5A5A5A" />
<rect x="338.5" y="157.5" width="775" height="644" fill="none" stroke="#3F3F46" stroke-width="1"/>
<rect x="342.5" y="161.5" width="767" height="314" fill="#252526" stroke="#454545" stroke-width="1"/>
<rect x="342.5" y="480.5" width="767" height="317" fill="#252526" stroke="#454545" stroke-width="1"/>
<text x="602" y="185.6" font-size="19.5" fill="#1A86E0" stroke="#1A86E0" stroke-width="0.18" textLength="248" lengthAdjust="spacingAndGlyphs" >Total fragmentation (indexes)</text>
<rect x="356" y="206" width="18" height="14" fill="#2E5597" />
<text x="379" y="216.6" font-size="11.4" fill="#E6E6E6" stroke="#E6E6E6" stroke-width="0.18" textLength="32.3" lengthAdjust="spacingAndGlyphs" >0-10%</text>
<rect x="418" y="206" width="18" height="14" fill="#9BBB59" />
<text x="441.5" y="216.6" font-size="11.4" fill="#E6E6E6" stroke="#E6E6E6" stroke-width="0.18" textLength="37.5" lengthAdjust="spacingAndGlyphs" >10-20%</text>
<rect x="486" y="206" width="18" height="14" fill="#F79646" />
<text x="509" y="216.6" font-size="11.4" fill="#E6E6E6" stroke="#E6E6E6" stroke-width="0.18" textLength="38" lengthAdjust="spacingAndGlyphs" >20-30%</text>
<rect x="554" y="206" width="18" height="14" fill="#C0504D" />
<text x="577" y="216.6" font-size="11.4" fill="#E6E6E6" stroke="#E6E6E6" stroke-width="0.18" textLength="30.3" lengthAdjust="spacingAndGlyphs" >&gt;30%</text>
<rect x="759" y="252" width="19" height="45" fill="#C0504D" />
<rect x="759" y="297" width="19" height="55" fill="#F79646" />
<rect x="759" y="352" width="19" height="63" fill="#9BBB59" />
<rect x="759" y="415" width="19" height="31" fill="#2E5597" />
<rect x="759" y="297" width="19" height="1" fill="#B05A3A" />
<rect x="759" y="352" width="19" height="1" fill="#C8884A" />
<rect x="759" y="415" width="19" height="1" fill="#5A7A6A" />
<rect x="789" y="252" width="19" height="45" fill="#C0504D" />
<rect x="789" y="297" width="19" height="55" fill="#F79646" />
<rect x="789" y="352" width="19" height="63" fill="#9BBB59" />
<rect x="789" y="415" width="19" height="31" fill="#2E5597" />
<rect x="789" y="297" width="19" height="1" fill="#B05A3A" />
<rect x="789" y="352" width="19" height="1" fill="#C8884A" />
<rect x="789" y="415" width="19" height="1" fill="#5A7A6A" />
<rect x="819" y="252" width="19" height="38" fill="#C0504D" />
<rect x="819" y="290" width="19" height="62" fill="#F79646" />
<rect x="819" y="352" width="19" height="63" fill="#9BBB59" />
<rect x="819" y="415" width="19" height="31" fill="#2E5597" />
<rect x="819" y="290" width="19" height="1" fill="#B05A3A" />
<rect x="819" y="352" width="19" height="1" fill="#C8884A" />
<rect x="819" y="415" width="19" height="1" fill="#5A7A6A" />
<rect x="849" y="252" width="19" height="38" fill="#C0504D" />
<rect x="849" y="290" width="19" height="56" fill="#F79646" />
<rect x="849" y="346" width="19" height="69" fill="#9BBB59" />
<rect x="849" y="415" width="19" height="31" fill="#2E5597" />
<rect x="849" y="290" width="19" height="1" fill="#B05A3A" />
<rect x="849" y="346" width="19" height="1" fill="#C8884A" />
<rect x="849" y="415" width="19" height="1" fill="#5A7A6A" />
<rect x="879" y="252" width="19" height="31" fill="#C0504D" />
<rect x="879" y="283" width="19" height="63" fill="#F79646" />
<rect x="879" y="346" width="19" height="69" fill="#9BBB59" />
<rect x="879" y="415" width="19" height="31" fill="#2E5597" />
<rect x="879" y="283" width="19" height="1" fill="#B05A3A" />
<rect x="879" y="346" width="19" height="1" fill="#C8884A" />
<rect x="879" y="415" width="19" height="1" fill="#5A7A6A" />
<rect x="909" y="252" width="19" height="31" fill="#C0504D" />
<rect x="909" y="283" width="19" height="63" fill="#F79646" />
<rect x="909" y="346" width="19" height="62" fill="#9BBB59" />
<rect x="909" y="408" width="19" height="38" fill="#2E5597" />
<rect x="909" y="283" width="19" height="1" fill="#B05A3A" />
<rect x="909" y="346" width="19" height="1" fill="#C8884A" />
<rect x="909" y="408" width="19" height="1" fill="#5A7A6A" />
<rect x="939" y="252" width="19" height="31" fill="#C0504D" />
<rect x="939" y="283" width="19" height="56" fill="#F79646" />
<rect x="939" y="339" width="19" height="69" fill="#9BBB59" />
<rect x="939" y="408" width="19" height="38" fill="#2E5597" />
<rect x="939" y="283" width="19" height="1" fill="#B05A3A" />
<rect x="939" y="339" width="19" height="1" fill="#C8884A" />
<rect x="939" y="408" width="19" height="1" fill="#5A7A6A" />
<rect x="969" y="252" width="19" height="31" fill="#C0504D" />
<rect x="969" y="283" width="19" height="56" fill="#F79646" />
<rect x="969" y="339" width="19" height="69" fill="#9BBB59" />
<rect x="969" y="408" width="19" height="38" fill="#2E5597" />
<rect x="969" y="283" width="19" height="1" fill="#B05A3A" />
<rect x="969" y="339" width="19" height="1" fill="#C8884A" />
<rect x="969" y="408" width="19" height="1" fill="#5A7A6A" />
<rect x="999" y="252" width="19" height="31" fill="#C0504D" />
<rect x="999" y="283" width="19" height="56" fill="#F79646" />
<rect x="999" y="339" width="19" height="69" fill="#9BBB59" />
<rect x="999" y="408" width="19" height="38" fill="#2E5597" />
<rect x="999" y="283" width="19" height="1" fill="#B05A3A" />
<rect x="999" y="339" width="19" height="1" fill="#C8884A" />
<rect x="999" y="408" width="19" height="1" fill="#5A7A6A" />
<rect x="379" y="233" width="720" height="1" fill="#474747"/>
<rect x="1098" y="233" width="1" height="219" fill="#474747"/>
<rect x="379" y="446" width="720" height="1" fill="#474747"/>
<rect x="379" y="233" width="1" height="33" fill="#474747"/>
<rect x="379" y="271" width="1" height="158" fill="#474747"/>
<rect x="379" y="434" width="1" height="18" fill="#474747"/>
<rect x="374" y="259" width="5" height="1" fill="#474747"/>
<rect x="374" y="283" width="5" height="1" fill="#474747"/>
<rect x="374" y="318" width="5" height="1" fill="#474747"/>
<rect x="374" y="352" width="5" height="1" fill="#474747"/>
<rect x="374" y="387" width="5" height="1" fill="#474747"/>
<rect x="374" y="422" width="5" height="1" fill="#474747"/>
<rect x="374" y="439" width="5" height="1" fill="#474747"/>
<rect x="377" y="235" width="2" height="1" fill="#474747"/>
<rect x="377" y="247" width="2" height="1" fill="#474747"/>
<rect x="377" y="272" width="2" height="1" fill="#474747"/>
<rect x="377" y="295" width="2" height="1" fill="#474747"/>
<rect x="377" y="306" width="2" height="1" fill="#474747"/>
<rect x="377" y="329" width="2" height="1" fill="#474747"/>
<rect x="377" y="341" width="2" height="1" fill="#474747"/>
<rect x="377" y="364" width="2" height="1" fill="#474747"/>
<rect x="377" y="376" width="2" height="1" fill="#474747"/>
<rect x="377" y="399" width="2" height="1" fill="#474747"/>
<rect x="377" y="410" width="2" height="1" fill="#474747"/>
<rect x="499" y="446" width="1" height="6" fill="#474747"/>
<rect x="619" y="446" width="1" height="6" fill="#474747"/>
<rect x="739" y="446" width="1" height="6" fill="#474747"/>
<rect x="859" y="446" width="1" height="6" fill="#474747"/>
<rect x="979" y="446" width="1" height="6" fill="#474747"/>
<text x="368" y="263" font-size="11.4" fill="#E6E6E6" stroke="#E6E6E6" stroke-width="0.18" textLength="17.61" lengthAdjust="spacingAndGlyphs" text-anchor="end" >416</text>
<text x="368" y="322.5" font-size="11.4" fill="#E6E6E6" stroke="#E6E6E6" stroke-width="0.18" textLength="17.61" lengthAdjust="spacingAndGlyphs" text-anchor="end" >326</text>
<text x="368" y="391.5" font-size="11.4" fill="#E6E6E6" stroke="#E6E6E6" stroke-width="0.18" textLength="17.61" lengthAdjust="spacingAndGlyphs" text-anchor="end" >316</text>
<text x="368" y="443" font-size="11.4" fill="#E6E6E6" stroke="#E6E6E6" stroke-width="0.18" textLength="5.87" lengthAdjust="spacingAndGlyphs" text-anchor="end" >1</text>
<polygon points="379,265.5 389,266.5 413,265.5 427,266.5 445,267.1 469,265.6 493,264.1 511,263.9 535,263.9 545,264.9 563,265.9 587,265.9 605,266.9 615,265.9 645,264.9 669,264.9 699,263.9 729,265.4 737,264.4 761,263.9 775,265.4 783,266.9 797,266.9 821,267.1 839,267.1 857,267.1 887,267.1 911,267.1 921,266.1 929,264.6 939,264.6 949,263.9 979,263.9 1009,265.4 1023,265.4 1047,266.9 1065,267.1 1079,267.1 1098,267.1 1098,272.1 1079,272.1 1065,272.1 1047,271.9 1023,270.4 1009,270.4 979,268.9 949,268.9 939,269.6 929,269.6 921,271.1 911,272.1 887,272.1 857,272.1 839,272.1 821,272.1 797,271.9 783,271.9 775,270.4 761,268.9 737,269.4 729,270.4 699,268.9 669,269.9 645,269.9 615,270.9 605,271.9 587,270.9 563,270.9 545,269.9 535,268.9 511,268.9 493,269.1 469,270.6 445,272.1 427,271.5 413,270.5 389,271.5 379,270.5" fill="#252526" shape-rendering="auto"/>
<polyline points="379,265.5 389,266.5 413,265.5 427,266.5 445,267.1 469,265.6 493,264.1 511,263.9 535,263.9 545,264.9 563,265.9 587,265.9 605,266.9 615,265.9 645,264.9 669,264.9 699,263.9 729,265.4 737,264.4 761,263.9 775,265.4 783,266.9 797,266.9 821,267.1 839,267.1 857,267.1 887,267.1 911,267.1 921,266.1 929,264.6 939,264.6 949,263.9 979,263.9 1009,265.4 1023,265.4 1047,266.9 1065,267.1 1079,267.1 1098,267.1" fill="none" stroke="#4A4A4A" stroke-width="1" shape-rendering="auto"/>
<polyline points="379,270.5 389,271.5 413,270.5 427,271.5 445,272.1 469,270.6 493,269.1 511,268.9 535,268.9 545,269.9 563,270.9 587,270.9 605,271.9 615,270.9 645,269.9 669,269.9 699,268.9 729,270.4 737,269.4 761,268.9 775,270.4 783,271.9 797,271.9 821,272.1 839,272.1 857,272.1 887,272.1 911,272.1 921,271.1 929,269.6 939,269.6 949,268.9 979,268.9 1009,270.4 1023,270.4 1047,271.9 1065,272.1 1079,272.1 1098,272.1" fill="none" stroke="#4E4E4E" stroke-width="1" shape-rendering="auto"/>
<polygon points="379,428.5 393,427.5 411,428.5 419,427.0 443,426.9 457,427.9 465,428.9 475,427.4 483,427.4 501,426.9 511,426.9 535,426.9 543,428.4 567,426.9 577,427.9 607,428.9 615,429.9 639,429.9 647,428.9 655,429.9 665,428.9 683,427.9 707,426.9 731,426.9 755,428.4 785,427.4 793,428.4 817,429.4 827,428.4 835,429.4 865,427.9 889,426.9 913,426.9 931,427.9 955,427.9 969,427.9 993,427.9 1007,426.9 1017,428.4 1027,429.4 1037,427.9 1061,426.9 1085,426.9 1098,427.9 1098,432.9 1085,431.9 1061,431.9 1037,432.9 1027,434.4 1017,433.4 1007,431.9 993,432.9 969,432.9 955,432.9 931,432.9 913,431.9 889,431.9 865,432.9 835,434.4 827,433.4 817,434.4 793,433.4 785,432.4 755,433.4 731,431.9 707,431.9 683,432.9 665,433.9 655,434.9 647,433.9 639,434.9 615,434.9 607,433.9 577,432.9 567,431.9 543,433.4 535,431.9 511,431.9 501,431.9 483,432.4 475,432.4 465,433.9 457,432.9 443,431.9 419,432.0 411,433.5 393,432.5 379,433.5" fill="#252526" shape-rendering="auto"/>
<polyline points="379,428.5 393,427.5 411,428.5 419,427.0 443,426.9 457,427.9 465,428.9 475,427.4 483,427.4 501,426.9 511,426.9 535,426.9 543,428.4 567,426.9 577,427.9 607,428.9 615,429.9 639,429.9 647,428.9 655,429.9 665,428.9 683,427.9 707,426.9 731,426.9 755,428.4 785,427.4 793,428.4 817,429.4 827,428.4 835,429.4 865,427.9 889,426.9 913,426.9 931,427.9 955,427.9 969,427.9 993,427.9 1007,426.9 1017,428.4 1027,429.4 1037,427.9 1061,426.9 1085,426.9 1098,427.9" fill="none" stroke="#4A4A4A" stroke-width="1" shape-rendering="auto"/>
<polyline points="379,433.5 393,432.5 411,433.5 419,432.0 443,431.9 457,432.9 465,433.9 475,432.4 483,432.4 501,431.9 511,431.9 535,431.9 543,433.4 567,431.9 577,432.9 607,433.9 615,434.9 639,434.9 647,433.9 655,434.9 665,433.9 683,432.9 707,431.9 731,431.9 755,433.4 785,432.4 793,433.4 817,434.4 827,433.4 835,434.4 865,432.9 889,431.9 913,431.9 931,432.9 955,432.9 969,432.9 993,432.9 1007,431.9 1017,433.4 1027,434.4 1037,432.9 1061,431.9 1085,431.9 1098,432.9" fill="none" stroke="#4E4E4E" stroke-width="1" shape-rendering="auto"/>
<text x="350" y="466" font-size="11.4" fill="#E6E6E6" stroke="#E6E6E6" stroke-width="0.18" textLength="92" lengthAdjust="spacingAndGlyphs" >8/29/2018 8:00 PM</text>
<text x="449.3" y="466" font-size="11.4" fill="#E6E6E6" stroke="#E6E6E6" stroke-width="0.18" textLength="99" lengthAdjust="spacingAndGlyphs" >8/30/2018 12:00 AM</text>
<text x="572" y="466" font-size="11.4" fill="#E6E6E6" stroke="#E6E6E6" stroke-width="0.18" textLength="93.6" lengthAdjust="spacingAndGlyphs" >8/30/2018 4:00 AM</text>
<text x="692.7" y="466" font-size="11.4" fill="#E6E6E6" stroke="#E6E6E6" stroke-width="0.18" textLength="92.6" lengthAdjust="spacingAndGlyphs" >8/30/2018 8:00 AM</text>
<text x="809" y="466" font-size="11.4" fill="#E6E6E6" stroke="#E6E6E6" stroke-width="0.18" textLength="98.7" lengthAdjust="spacingAndGlyphs" >8/30/2018 12:00 PM</text>
<text x="932.1" y="466" font-size="11.4" fill="#E6E6E6" stroke="#E6E6E6" stroke-width="0.18" textLength="92.8" lengthAdjust="spacingAndGlyphs" >8/30/2018 4:00 PM</text>
<path d="M440.4 445 Q443 459.5 440.4 474 Q437.8 459.5 440.4 445 Z" fill="#F7941D" shape-rendering="auto"/>
<text x="627" y="504.8" font-size="19.5" fill="#1A86E0" stroke="#1A86E0" stroke-width="0.18" textLength="199" lengthAdjust="spacingAndGlyphs" >Total space usage (MB)</text>
<rect x="379" y="522" width="720" height="1" fill="#474747"/>
<rect x="1098" y="522" width="1" height="252" fill="#474747"/>
<rect x="379" y="522" width="1" height="252" fill="#474747"/>
<rect x="379" y="768" width="720" height="1" fill="#474747"/>
<rect x="374" y="534" width="5" height="1" fill="#474747"/>
<text x="368" y="538" font-size="11.4" fill="#E6E6E6" stroke="#E6E6E6" stroke-width="0.18" textLength="17.61" lengthAdjust="spacingAndGlyphs" text-anchor="end" >250</text>
<rect x="374" y="576" width="5" height="1" fill="#474747"/>
<text x="368" y="580" font-size="11.4" fill="#E6E6E6" stroke="#E6E6E6" stroke-width="0.18" textLength="17.61" lengthAdjust="spacingAndGlyphs" text-anchor="end" >200</text>
<rect x="374" y="619" width="5" height="1" fill="#474747"/>
<text x="368" y="623" font-size="11.4" fill="#E6E6E6" stroke="#E6E6E6" stroke-width="0.18" textLength="17.61" lengthAdjust="spacingAndGlyphs" text-anchor="end" >150</text>
<rect x="374" y="662" width="5" height="1" fill="#474747"/>
<text x="368" y="666" font-size="11.4" fill="#E6E6E6" stroke="#E6E6E6" stroke-width="0.18" textLength="17.61" lengthAdjust="spacingAndGlyphs" text-anchor="end" >100</text>
<rect x="374" y="705" width="5" height="1" fill="#474747"/>
<text x="368" y="709" font-size="11.4" fill="#E6E6E6" stroke="#E6E6E6" stroke-width="0.18" textLength="11.74" lengthAdjust="spacingAndGlyphs" text-anchor="end" >50</text>
<rect x="374" y="747" width="5" height="1" fill="#474747"/>
<text x="368" y="751" font-size="11.4" fill="#E6E6E6" stroke="#E6E6E6" stroke-width="0.18" textLength="5.87" lengthAdjust="spacingAndGlyphs" text-anchor="end" >0</text>
<rect x="499" y="768" width="1" height="6" fill="#474747"/>
<rect x="619" y="768" width="1" height="6" fill="#474747"/>
<rect x="739" y="768" width="1" height="6" fill="#474747"/>
<rect x="859" y="768" width="1" height="6" fill="#474747"/>
<rect x="979" y="768" width="1" height="6" fill="#474747"/>
<text x="350" y="788" font-size="11.4" fill="#E6E6E6" stroke="#E6E6E6" stroke-width="0.18" textLength="92" lengthAdjust="spacingAndGlyphs" >8/29/2018 8:00 PM</text>
<text x="449.3" y="788" font-size="11.4" fill="#E6E6E6" stroke="#E6E6E6" stroke-width="0.18" textLength="99" lengthAdjust="spacingAndGlyphs" >8/30/2018 12:00 AM</text>
<text x="572" y="788" font-size="11.4" fill="#E6E6E6" stroke="#E6E6E6" stroke-width="0.18" textLength="93.6" lengthAdjust="spacingAndGlyphs" >8/30/2018 4:00 AM</text>
<text x="692.7" y="788" font-size="11.4" fill="#E6E6E6" stroke="#E6E6E6" stroke-width="0.18" textLength="92.6" lengthAdjust="spacingAndGlyphs" >8/30/2018 8:00 AM</text>
<text x="809" y="788" font-size="11.4" fill="#E6E6E6" stroke="#E6E6E6" stroke-width="0.18" textLength="98.7" lengthAdjust="spacingAndGlyphs" >8/30/2018 12:00 PM</text>
<text x="932.1" y="788" font-size="11.4" fill="#E6E6E6" stroke="#E6E6E6" stroke-width="0.18" textLength="92.8" lengthAdjust="spacingAndGlyphs" >8/30/2018 4:00 PM</text>
<g shape-rendering="auto"><polyline points="380,748 739,748 768.2,543.8 1008.5,543 1038.5,748 1098,748" fill="none" stroke="#4BACC6" stroke-width="2"/>
</g>
<rect x="380" y="747" width="2" height="2" fill="#3C78D8" />
<rect x="384" y="747" width="2" height="2" fill="#3C78D8" />
<rect x="388" y="747" width="2" height="2" fill="#3C78D8" />
<rect x="392" y="747" width="2" height="2" fill="#3C78D8" />
<rect x="396" y="747" width="2" height="2" fill="#3C78D8" />
<rect x="400" y="747" width="2" height="2" fill="#3C78D8" />
<rect x="404" y="747" width="2" height="2" fill="#3C78D8" />
<rect x="408" y="747" width="2" height="2" fill="#3C78D8" />
<rect x="412" y="747" width="2" height="2" fill="#3C78D8" />
<rect x="416" y="747" width="2" height="2" fill="#3C78D8" />
<rect x="420" y="747" width="2" height="2" fill="#3C78D8" />
<rect x="424" y="747" width="2" height="2" fill="#3C78D8" />
<rect x="428" y="747" width="2" height="2" fill="#3C78D8" />
<rect x="432" y="747" width="2" height="2" fill="#3C78D8" />
<rect x="436" y="747" width="2" height="2" fill="#3C78D8" />
<rect x="440" y="747" width="2" height="2" fill="#3C78D8" />
<rect x="444" y="747" width="2" height="2" fill="#3C78D8" />
<rect x="448" y="747" width="2" height="2" fill="#3C78D8" />
<rect x="452" y="747" width="2" height="2" fill="#3C78D8" />
<rect x="456" y="747" width="2" height="2" fill="#3C78D8" />
<rect x="460" y="747" width="2" height="2" fill="#3C78D8" />
<rect x="464" y="747" width="2" height="2" fill="#3C78D8" />
<rect x="468" y="747" width="2" height="2" fill="#3C78D8" />
<rect x="472" y="747" width="2" height="2" fill="#3C78D8" />
<rect x="476" y="747" width="2" height="2" fill="#3C78D8" />
<rect x="480" y="747" width="2" height="2" fill="#3C78D8" />
<rect x="484" y="747" width="2" height="2" fill="#3C78D8" />
<rect x="488" y="747" width="2" height="2" fill="#3C78D8" />
<rect x="492" y="747" width="2" height="2" fill="#3C78D8" />
<rect x="496" y="747" width="2" height="2" fill="#3C78D8" />
<rect x="500" y="747" width="2" height="2" fill="#3C78D8" />
<rect x="504" y="747" width="2" height="2" fill="#3C78D8" />
<rect x="508" y="747" width="2" height="2" fill="#3C78D8" />
<rect x="512" y="747" width="2" height="2" fill="#3C78D8" />
<rect x="516" y="747" width="2" height="2" fill="#3C78D8" />
<rect x="520" y="747" width="2" height="2" fill="#3C78D8" />
<rect x="524" y="747" width="2" height="2" fill="#3C78D8" />
<rect x="528" y="747" width="2" height="2" fill="#3C78D8" />
<rect x="532" y="747" width="2" height="2" fill="#3C78D8" />
<rect x="536" y="747" width="2" height="2" fill="#3C78D8" />
<rect x="540" y="747" width="2" height="2" fill="#3C78D8" />
<rect x="544" y="747" width="2" height="2" fill="#3C78D8" />
<rect x="548" y="747" width="2" height="2" fill="#3C78D8" />
<rect x="552" y="747" width="2" height="2" fill="#3C78D8" />
<rect x="556" y="747" width="2" height="2" fill="#3C78D8" />
<rect x="560" y="747" width="2" height="2" fill="#3C78D8" />
<rect x="564" y="747" width="2" height="2" fill="#3C78D8" />
<rect x="568" y="747" width="2" height="2" fill="#3C78D8" />
<rect x="572" y="747" width="2" height="2" fill="#3C78D8" />
<rect x="576" y="747" width="2" height="2" fill="#3C78D8" />
<rect x="580" y="747" width="2" height="2" fill="#3C78D8" />
<rect x="584" y="747" width="2" height="2" fill="#3C78D8" />
<rect x="588" y="747" width="2" height="2" fill="#3C78D8" />
<rect x="592" y="747" width="2" height="2" fill="#3C78D8" />
<rect x="596" y="747" width="2" height="2" fill="#3C78D8" />
<rect x="600" y="747" width="2" height="2" fill="#3C78D8" />
<rect x="604" y="747" width="2" height="2" fill="#3C78D8" />
<rect x="608" y="747" width="2" height="2" fill="#3C78D8" />
<rect x="612" y="747" width="2" height="2" fill="#3C78D8" />
<rect x="616" y="747" width="2" height="2" fill="#3C78D8" />
<rect x="620" y="747" width="2" height="2" fill="#3C78D8" />
<rect x="624" y="747" width="2" height="2" fill="#3C78D8" />
<rect x="628" y="747" width="2" height="2" fill="#3C78D8" />
<rect x="632" y="747" width="2" height="2" fill="#3C78D8" />
<rect x="636" y="747" width="2" height="2" fill="#3C78D8" />
<rect x="640" y="747" width="2" height="2" fill="#3C78D8" />
<rect x="644" y="747" width="2" height="2" fill="#3C78D8" />
<rect x="648" y="747" width="2" height="2" fill="#3C78D8" />
<rect x="652" y="747" width="2" height="2" fill="#3C78D8" />
<rect x="656" y="747" width="2" height="2" fill="#3C78D8" />
<rect x="660" y="747" width="2" height="2" fill="#3C78D8" />
<rect x="664" y="747" width="2" height="2" fill="#3C78D8" />
<rect x="668" y="747" width="2" height="2" fill="#3C78D8" />
<rect x="672" y="747" width="2" height="2" fill="#3C78D8" />
<rect x="676" y="747" width="2" height="2" fill="#3C78D8" />
<rect x="680" y="747" width="2" height="2" fill="#3C78D8" />
<rect x="684" y="747" width="2" height="2" fill="#3C78D8" />
<rect x="688" y="747" width="2" height="2" fill="#3C78D8" />
<rect x="692" y="747" width="2" height="2" fill="#3C78D8" />
<rect x="696" y="747" width="2" height="2" fill="#3C78D8" />
<rect x="700" y="747" width="2" height="2" fill="#3C78D8" />
<rect x="704" y="747" width="2" height="2" fill="#3C78D8" />
<rect x="708" y="747" width="2" height="2" fill="#3C78D8" />
<rect x="712" y="747" width="2" height="2" fill="#3C78D8" />
<rect x="716" y="747" width="2" height="2" fill="#3C78D8" />
<rect x="720" y="747" width="2" height="2" fill="#3C78D8" />
<rect x="724" y="747" width="2" height="2" fill="#3C78D8" />
<rect x="728" y="747" width="2" height="2" fill="#3C78D8" />
<rect x="732" y="747" width="2" height="2" fill="#3C78D8" />
<rect x="736" y="747" width="2" height="2" fill="#3C78D8" />
<rect x="740" y="747" width="2" height="2" fill="#3C78D8" />
<rect x="744" y="747" width="2" height="2" fill="#3C78D8" />
<rect x="748" y="747" width="2" height="2" fill="#3C78D8" />
<rect x="752" y="747" width="2" height="2" fill="#3C78D8" />
<rect x="756" y="747" width="2" height="2" fill="#3C78D8" />
<rect x="760" y="747" width="2" height="2" fill="#3C78D8" />
<rect x="764" y="747" width="2" height="2" fill="#3C78D8" />
<rect x="768" y="747" width="2" height="2" fill="#3C78D8" />
<rect x="772" y="747" width="2" height="2" fill="#3C78D8" />
<rect x="776" y="747" width="2" height="2" fill="#3C78D8" />
<rect x="780" y="747" width="2" height="2" fill="#3C78D8" />
<rect x="784" y="747" width="2" height="2" fill="#3C78D8" />
<rect x="788" y="747" width="2" height="2" fill="#3C78D8" />
<rect x="792" y="747" width="2" height="2" fill="#3C78D8" />
<rect x="796" y="747" width="2" height="2" fill="#3C78D8" />
<rect x="800" y="747" width="2" height="2" fill="#3C78D8" />
<rect x="804" y="747" width="2" height="2" fill="#3C78D8" />
<rect x="808" y="747" width="2" height="2" fill="#3C78D8" />
<rect x="812" y="747" width="2" height="2" fill="#3C78D8" />
<rect x="816" y="747" width="2" height="2" fill="#3C78D8" />
<rect x="820" y="747" width="2" height="2" fill="#3C78D8" />
<rect x="824" y="747" width="2" height="2" fill="#3C78D8" />
<rect x="828" y="747" width="2" height="2" fill="#3C78D8" />
<rect x="832" y="747" width="2" height="2" fill="#3C78D8" />
<rect x="836" y="747" width="2" height="2" fill="#3C78D8" />
<rect x="840" y="747" width="2" height="2" fill="#3C78D8" />
<rect x="844" y="747" width="2" height="2" fill="#3C78D8" />
<rect x="848" y="747" width="2" height="2" fill="#3C78D8" />
<rect x="852" y="747" width="2" height="2" fill="#3C78D8" />
<rect x="856" y="747" width="2" height="2" fill="#3C78D8" />
<rect x="860" y="747" width="2" height="2" fill="#3C78D8" />
<rect x="864" y="747" width="2" height="2" fill="#3C78D8" />
<rect x="868" y="747" width="2" height="2" fill="#3C78D8" />
<rect x="872" y="747" width="2" height="2" fill="#3C78D8" />
<rect x="876" y="747" width="2" height="2" fill="#3C78D8" />
<rect x="880" y="747" width="2" height="2" fill="#3C78D8" />
<rect x="884" y="747" width="2" height="2" fill="#3C78D8" />
<rect x="888" y="747" width="2" height="2" fill="#3C78D8" />
<rect x="892" y="747" width="2" height="2" fill="#3C78D8" />
<rect x="896" y="747" width="2" height="2" fill="#3C78D8" />
<rect x="900" y="747" width="2" height="2" fill="#3C78D8" />
<rect x="904" y="747" width="2" height="2" fill="#3C78D8" />
<rect x="908" y="747" width="2" height="2" fill="#3C78D8" />
<rect x="912" y="747" width="2" height="2" fill="#3C78D8" />
<rect x="916" y="747" width="2" height="2" fill="#3C78D8" />
<rect x="920" y="747" width="2" height="2" fill="#3C78D8" />
<rect x="924" y="747" width="2" height="2" fill="#3C78D8" />
<rect x="928" y="747" width="2" height="2" fill="#3C78D8" />
<rect x="932" y="747" width="2" height="2" fill="#3C78D8" />
<rect x="936" y="747" width="2" height="2" fill="#3C78D8" />
<rect x="940" y="747" width="2" height="2" fill="#3C78D8" />
<rect x="944" y="747" width="2" height="2" fill="#3C78D8" />
<rect x="948" y="747" width="2" height="2" fill="#3C78D8" />
<rect x="952" y="747" width="2" height="2" fill="#3C78D8" />
<rect x="956" y="747" width="2" height="2" fill="#3C78D8" />
<rect x="960" y="747" width="2" height="2" fill="#3C78D8" />
<rect x="964" y="747" width="2" height="2" fill="#3C78D8" />
<rect x="968" y="747" width="2" height="2" fill="#3C78D8" />
<rect x="972" y="747" width="2" height="2" fill="#3C78D8" />
<rect x="976" y="747" width="2" height="2" fill="#3C78D8" />
<rect x="980" y="747" width="2" height="2" fill="#3C78D8" />
<rect x="984" y="747" width="2" height="2" fill="#3C78D8" />
<rect x="988" y="747" width="2" height="2" fill="#3C78D8" />
<rect x="992" y="747" width="2" height="2" fill="#3C78D8" />
<rect x="996" y="747" width="2" height="2" fill="#3C78D8" />
<rect x="1000" y="747" width="2" height="2" fill="#3C78D8" />
<rect x="1004" y="747" width="2" height="2" fill="#3C78D8" />
<rect x="1008" y="747" width="2" height="2" fill="#3C78D8" />
<rect x="1012" y="747" width="2" height="2" fill="#3C78D8" />
<rect x="1016" y="747" width="2" height="2" fill="#3C78D8" />
<rect x="1020" y="747" width="2" height="2" fill="#3C78D8" />
<rect x="1024" y="747" width="2" height="2" fill="#3C78D8" />
<rect x="1028" y="747" width="2" height="2" fill="#3C78D8" />
<rect x="1032" y="747" width="2" height="2" fill="#3C78D8" />
<rect x="1036" y="747" width="2" height="2" fill="#3C78D8" />
<rect x="1040" y="747" width="2" height="2" fill="#3C78D8" />
<rect x="1044" y="747" width="2" height="2" fill="#3C78D8" />
<rect x="1048" y="747" width="2" height="2" fill="#3C78D8" />
<rect x="1052" y="747" width="2" height="2" fill="#3C78D8" />
<rect x="1056" y="747" width="2" height="2" fill="#3C78D8" />
<rect x="1060" y="747" width="2" height="2" fill="#3C78D8" />
<rect x="1064" y="747" width="2" height="2" fill="#3C78D8" />
<rect x="1068" y="747" width="2" height="2" fill="#3C78D8" />
<rect x="1072" y="747" width="2" height="2" fill="#3C78D8" />
<rect x="1076" y="747" width="2" height="2" fill="#3C78D8" />
<rect x="1080" y="747" width="2" height="2" fill="#3C78D8" />
<rect x="1084" y="747" width="2" height="2" fill="#3C78D8" />
<rect x="1088" y="747" width="2" height="2" fill="#3C78D8" />
<rect x="1092" y="747" width="2" height="2" fill="#3C78D8" />
<rect x="1096" y="747" width="2" height="2" fill="#3C78D8" />
<circle cx="768.2" cy="543.3" r="8" fill="#4BACC6" shape-rendering="auto"/>
<rect x="777.0" y="550.0" width="138" height="51" fill="#666666" stroke="#FFFFFF" stroke-width="2"/>
<rect x="788" y="567" width="16" height="1" fill="#4BACC6"/>
<text x="807" y="572" font-size="11.4" fill="#F1F1F1" stroke="#F1F1F1" stroke-width="0.18" textLength="26.7" lengthAdjust="spacingAndGlyphs" >238.6</text>
<text x="807" y="586" font-size="11.4" fill="#F1F1F1" stroke="#F1F1F1" stroke-width="0.18" textLength="93.5" lengthAdjust="spacingAndGlyphs" >8/30/2018 9:00 AM</text>
<rect x="0" y="812" width="1131" height="24" fill="#007ACC" />
<text x="15.6" y="828" font-size="11.4" fill="#FFFFFF" stroke="#FFFFFF" stroke-width="0.18" textLength="30.4" lengthAdjust="spacingAndGlyphs" >Ready</text>
<rect x="62" y="817" width="8" height="14" fill="#CCCCCC" />
<rect x="64" y="819" width="4" height="1" fill="#2E3192" />
<rect x="64" y="821" width="4" height="1" fill="#2E3192" />
<rect x="66" y="828" width="1" height="1" fill="#2E3192" />
<text x="79.6" y="828" font-size="11.4" fill="#FFFFFF" stroke="#FFFFFF" stroke-width="0.18" textLength="58.9" lengthAdjust="spacingAndGlyphs" >Instances: 1</text>
<g shape-rendering="auto">
<path d="M153 819.5 A6 2.5 0 0 1 165 819.5 V828.5 A6 2.5 0 0 1 153 828.5 Z" fill="#CCCCCC"/>
<ellipse cx="159" cy="819.7" rx="4.5" ry="1.5" fill="#2E3192"/>
</g>
<text x="172.6" y="828" font-size="11.4" fill="#FFFFFF" stroke="#FFFFFF" stroke-width="0.18" textLength="64.4" lengthAdjust="spacingAndGlyphs" >Databases: 0</text>
<rect x="250" y="817" width="14" height="11" fill="#E6E6E6" />
<rect x="251" y="820" width="11" height="7" fill="#2E3BB0" />
<g shape-rendering="auto">
<path d="M250.5 822 A3.8 1.6 0 0 1 258.1 822 V830 A3.8 1.6 0 0 1 250.5 830 Z" fill="#CCCCCC" stroke="#0A5FA0" stroke-width="0.6"/>
<ellipse cx="254.3" cy="822.2" rx="2.8" ry="1" fill="#2E3BB0"/>
</g>
<text x="270.6" y="828" font-size="11.4" fill="#FFFFFF" stroke="#FFFFFF" stroke-width="0.18" textLength="54.4" lengthAdjust="spacingAndGlyphs" >Repository</text>
<g shape-rendering="auto" fill="none" stroke="#D9D2C5">
<circle cx="342" cy="826.5" r="2.2" stroke-width="1.4"/>
<circle cx="342" cy="826.5" r="3.6" stroke-width="1.6" stroke-dasharray="1.4 1.4"/>
<circle cx="348.5" cy="820" r="2.2" stroke-width="1.4"/>
<circle cx="348.5" cy="820" r="3.6" stroke-width="1.6" stroke-dasharray="1.4 1.4"/>
</g>
<text x="358.4" y="828" font-size="11.4" fill="#FFFFFF" stroke="#FFFFFF" stroke-width="0.18" textLength="30.3" lengthAdjust="spacingAndGlyphs" >Agent</text>
<text x="881" y="828" font-size="11.4" fill="#FFFFFF" stroke="#FFFFFF" stroke-width="0.18" textLength="80" lengthAdjust="spacingAndGlyphs" >Row count: 417</text>
<text x="973.6" y="828" font-size="11.4" fill="#FFFFFF" stroke="#FFFFFF" stroke-width="0.18" textLength="54.9" lengthAdjust="spacingAndGlyphs" >Selected: 0</text>
<text x="1040.3" y="828" font-size="11.4" fill="#FFFFFF" stroke="#FFFFFF" stroke-width="0.18" textLength="56" lengthAdjust="spacingAndGlyphs" >Checked: 0</text>
<rect x="1121" y="823" width="1" height="1" fill="#9FC9EC" />
<rect x="1118" y="826" width="1" height="1" fill="#9FC9EC" />
<rect x="1121" y="826" width="1" height="1" fill="#9FC9EC" />
<rect x="1115" y="829" width="1" height="1" fill="#9FC9EC" />
<rect x="1118" y="829" width="1" height="1" fill="#9FC9EC" />
<rect x="1121" y="829" width="1" height="1" fill="#9FC9EC" />
</svg></body></html>
